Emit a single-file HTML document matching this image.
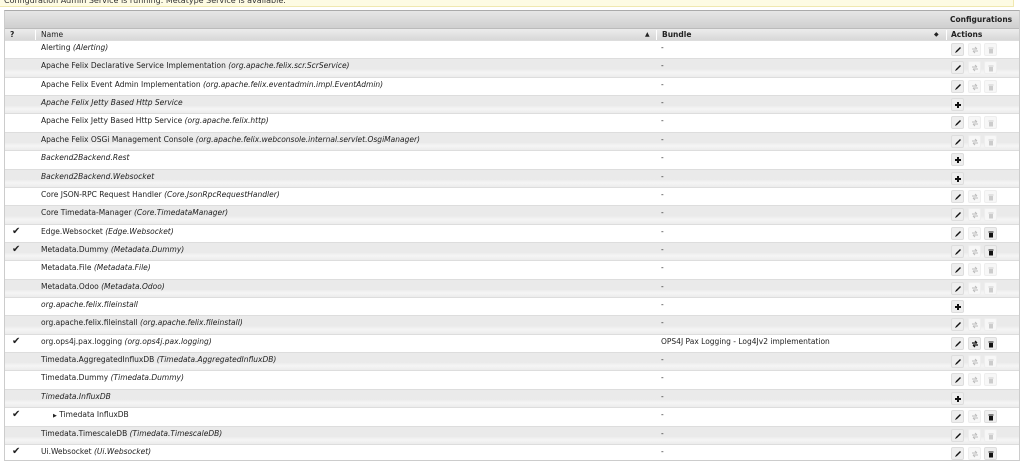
<!DOCTYPE html>
<html><head><meta charset="utf-8"><style>
*{margin:0;padding:0;box-sizing:border-box}
body{width:1024px;height:463px;overflow:hidden;background:#fff;font-family:"DejaVu Sans","Liberation Sans",sans-serif;font-size:7.5px;color:#222;position:relative}
.banner{position:absolute;left:0;top:0;width:1014px;height:7px;background:#fdfbe3;border-bottom:1px solid #f0e8b0;border-right:1px solid #f0e8b0;font-size:8px;line-height:0;color:#333}
.banner span{position:absolute;left:4px;top:-3px;line-height:7px}
.tbl{position:absolute;left:4px;top:10px;width:1016px;height:451px;border:1px solid #ccc;border-top:1px solid #aaa}
.h1{position:absolute;left:0;top:0;width:1014px;height:18px;background:linear-gradient(#e6e6e6,#cfcfcf);border-bottom:1px solid #bbb}
.h1 b{position:absolute;left:945px;top:4px;font-size:7.5px}
.h2{position:absolute;left:0;top:18px;width:1014px;height:11px;background:linear-gradient(#ececec,#d8d8d8);font-size:7.5px;line-height:11px;font-weight:bold}
.h2 span{position:absolute;top:0}
.h2 i{position:absolute;top:1px;width:1px;height:10px;background:#fff}
.r{position:absolute;left:0;width:1014px;height:18.36px;border-top:1px solid #ddd}
.g{background:linear-gradient(#eaeaea 0,#eaeaea 55%,#f5f5f5 75%,#ececec 100%)}
.r span{position:absolute;top:1px;line-height:11px;white-space:nowrap}
.n{left:36px}.bu{left:656px}
.ck{left:7px;font-size:10px}
.a{position:absolute;top:2px;left:946px;height:13px}
.btn{position:absolute;top:0;width:13px;height:13px;background:#eee;border:1px solid #ddd;border-radius:2px}
.btn svg{position:absolute;left:2px;top:2px}
</style></head><body>
<div class="banner"><span>Configuration Admin Service is running. Metatype Service is available.</span></div>
<div class="tbl">
<div class="h1"><b>Configurations</b></div>
<div class="h2"><span style="left:5px">?</span><span style="left:36px;font-weight:normal">Name</span><span style="left:640px;font-size:6px">▲</span><span style="left:657px">Bundle</span><span style="left:929px;font-size:6px">◆</span><span style="left:946px">Actions</span><i style="left:30px"></i><i style="left:651px"></i><i style="left:941px"></i></div>

<div class="r" style="top:29px"><span class="n">Alerting <i>(Alerting)</i></span><span class="bu">-</span><div class="a"><div class="btn" style="left:0"><svg width="8" height="8"><path d="M1 7L2 5L6 1L7 2L3 6Z" fill="#111"/></svg></div><div class="btn" style="left:17px;background:#f7f7f7;border-color:#eee"><svg width="8" height="8"><path d="M1 3H6M4 1L6 3M7 5H2M4 7L2 5" stroke="#bbb" fill="none"/></svg></div><div class="btn" style="left:33px;background:#f7f7f7;border-color:#eee"><svg width="8" height="8"><path d="M1.5 1.5H6.5V2.5H1.5ZM2 3H6V7.5H2Z" fill="#ccc"/></svg></div></div></div>

<div class="r g" style="top:47.36px"><span class="n">Apache Felix Declarative Service Implementation <i>(org.apache.felix.scr.ScrService)</i></span><span class="bu">-</span><div class="a"><div class="btn" style="left:0"><svg width="8" height="8"><path d="M1 7L2 5L6 1L7 2L3 6Z" fill="#111"/></svg></div><div class="btn" style="left:17px;background:#f7f7f7;border-color:#eee"><svg width="8" height="8"><path d="M1 3H6M4 1L6 3M7 5H2M4 7L2 5" stroke="#bbb" fill="none"/></svg></div><div class="btn" style="left:33px;background:#f7f7f7;border-color:#eee"><svg width="8" height="8"><path d="M1.5 1.5H6.5V2.5H1.5ZM2 3H6V7.5H2Z" fill="#ccc"/></svg></div></div></div>

<div class="r" style="top:65.72px"><span class="n">Apache Felix Event Admin Implementation <i>(org.apache.felix.eventadmin.impl.EventAdmin)</i></span><span class="bu">-</span><div class="a"><div class="btn" style="left:0"><svg width="8" height="8"><path d="M1 7L2 5L6 1L7 2L3 6Z" fill="#111"/></svg></div><div class="btn" style="left:17px;background:#f7f7f7;border-color:#eee"><svg width="8" height="8"><path d="M1 3H6M4 1L6 3M7 5H2M4 7L2 5" stroke="#bbb" fill="none"/></svg></div><div class="btn" style="left:33px;background:#f7f7f7;border-color:#eee"><svg width="8" height="8"><path d="M1.5 1.5H6.5V2.5H1.5ZM2 3H6V7.5H2Z" fill="#ccc"/></svg></div></div></div>

<div class="r g" style="top:84.08px"><span class="n"><i>Apache Felix Jetty Based Http Service</i></span><span class="bu">-</span><div class="a"><div class="btn" style="left:0"><svg width="8" height="8"><path d="M3 1H5V3H7V5H5V7H3V5H1V3H3Z" fill="#111"/></svg></div></div></div>

<div class="r" style="top:102.44px"><span class="n">Apache Felix Jetty Based Http Service <i>(org.apache.felix.http)</i></span><span class="bu">-</span><div class="a"><div class="btn" style="left:0"><svg width="8" height="8"><path d="M1 7L2 5L6 1L7 2L3 6Z" fill="#111"/></svg></div><div class="btn" style="left:17px;background:#f7f7f7;border-color:#eee"><svg width="8" height="8"><path d="M1 3H6M4 1L6 3M7 5H2M4 7L2 5" stroke="#bbb" fill="none"/></svg></div><div class="btn" style="left:33px;background:#f7f7f7;border-color:#eee"><svg width="8" height="8"><path d="M1.5 1.5H6.5V2.5H1.5ZM2 3H6V7.5H2Z" fill="#ccc"/></svg></div></div></div>

<div class="r g" style="top:120.8px"><span class="n">Apache Felix OSGi Management Console <i>(org.apache.felix.webconsole.internal.servlet.OsgiManager)</i></span><span class="bu">-</span><div class="a"><div class="btn" style="left:0"><svg width="8" height="8"><path d="M1 7L2 5L6 1L7 2L3 6Z" fill="#111"/></svg></div><div class="btn" style="left:17px;background:#f7f7f7;border-color:#eee"><svg width="8" height="8"><path d="M1 3H6M4 1L6 3M7 5H2M4 7L2 5" stroke="#bbb" fill="none"/></svg></div><div class="btn" style="left:33px;background:#f7f7f7;border-color:#eee"><svg width="8" height="8"><path d="M1.5 1.5H6.5V2.5H1.5ZM2 3H6V7.5H2Z" fill="#ccc"/></svg></div></div></div>

<div class="r" style="top:139.16px"><span class="n"><i>Backend2Backend.Rest</i></span><span class="bu">-</span><div class="a"><div class="btn" style="left:0"><svg width="8" height="8"><path d="M3 1H5V3H7V5H5V7H3V5H1V3H3Z" fill="#111"/></svg></div></div></div>

<div class="r g" style="top:157.52px"><span class="n"><i>Backend2Backend.Websocket</i></span><span class="bu">-</span><div class="a"><div class="btn" style="left:0"><svg width="8" height="8"><path d="M3 1H5V3H7V5H5V7H3V5H1V3H3Z" fill="#111"/></svg></div></div></div>

<div class="r" style="top:175.88px"><span class="n">Core JSON-RPC Request Handler <i>(Core.JsonRpcRequestHandler)</i></span><span class="bu">-</span><div class="a"><div class="btn" style="left:0"><svg width="8" height="8"><path d="M1 7L2 5L6 1L7 2L3 6Z" fill="#111"/></svg></div><div class="btn" style="left:17px;background:#f7f7f7;border-color:#eee"><svg width="8" height="8"><path d="M1 3H6M4 1L6 3M7 5H2M4 7L2 5" stroke="#bbb" fill="none"/></svg></div><div class="btn" style="left:33px;background:#f7f7f7;border-color:#eee"><svg width="8" height="8"><path d="M1.5 1.5H6.5V2.5H1.5ZM2 3H6V7.5H2Z" fill="#ccc"/></svg></div></div></div>

<div class="r g" style="top:194.24px"><span class="n">Core Timedata-Manager <i>(Core.TimedataManager)</i></span><span class="bu">-</span><div class="a"><div class="btn" style="left:0"><svg width="8" height="8"><path d="M1 7L2 5L6 1L7 2L3 6Z" fill="#111"/></svg></div><div class="btn" style="left:17px;background:#f7f7f7;border-color:#eee"><svg width="8" height="8"><path d="M1 3H6M4 1L6 3M7 5H2M4 7L2 5" stroke="#bbb" fill="none"/></svg></div><div class="btn" style="left:33px;background:#f7f7f7;border-color:#eee"><svg width="8" height="8"><path d="M1.5 1.5H6.5V2.5H1.5ZM2 3H6V7.5H2Z" fill="#ccc"/></svg></div></div></div>

<div class="r" style="top:212.6px"><span class="ck">✔</span><span class="n">Edge.Websocket <i>(Edge.Websocket)</i></span><span class="bu">-</span><div class="a"><div class="btn" style="left:0"><svg width="8" height="8"><path d="M1 7L2 5L6 1L7 2L3 6Z" fill="#111"/></svg></div><div class="btn" style="left:17px;background:#f7f7f7;border-color:#eee"><svg width="8" height="8"><path d="M1 3H6M4 1L6 3M7 5H2M4 7L2 5" stroke="#bbb" fill="none"/></svg></div><div class="btn" style="left:33px"><svg width="8" height="8"><path d="M1.5 1.5H6.5V2.5H1.5ZM2 3H6V7.5H2Z" fill="#111"/></svg></div></div></div>

<div class="r g" style="top:230.96px"><span class="ck">✔</span><span class="n">Metadata.Dummy <i>(Metadata.Dummy)</i></span><span class="bu">-</span><div class="a"><div class="btn" style="left:0"><svg width="8" height="8"><path d="M1 7L2 5L6 1L7 2L3 6Z" fill="#111"/></svg></div><div class="btn" style="left:17px;background:#f7f7f7;border-color:#eee"><svg width="8" height="8"><path d="M1 3H6M4 1L6 3M7 5H2M4 7L2 5" stroke="#bbb" fill="none"/></svg></div><div class="btn" style="left:33px"><svg width="8" height="8"><path d="M1.5 1.5H6.5V2.5H1.5ZM2 3H6V7.5H2Z" fill="#111"/></svg></div></div></div>

<div class="r" style="top:249.32px"><span class="n">Metadata.File <i>(Metadata.File)</i></span><span class="bu">-</span><div class="a"><div class="btn" style="left:0"><svg width="8" height="8"><path d="M1 7L2 5L6 1L7 2L3 6Z" fill="#111"/></svg></div><div class="btn" style="left:17px;background:#f7f7f7;border-color:#eee"><svg width="8" height="8"><path d="M1 3H6M4 1L6 3M7 5H2M4 7L2 5" stroke="#bbb" fill="none"/></svg></div><div class="btn" style="left:33px;background:#f7f7f7;border-color:#eee"><svg width="8" height="8"><path d="M1.5 1.5H6.5V2.5H1.5ZM2 3H6V7.5H2Z" fill="#ccc"/></svg></div></div></div>

<div class="r g" style="top:267.68px"><span class="n">Metadata.Odoo <i>(Metadata.Odoo)</i></span><span class="bu">-</span><div class="a"><div class="btn" style="left:0"><svg width="8" height="8"><path d="M1 7L2 5L6 1L7 2L3 6Z" fill="#111"/></svg></div><div class="btn" style="left:17px;background:#f7f7f7;border-color:#eee"><svg width="8" height="8"><path d="M1 3H6M4 1L6 3M7 5H2M4 7L2 5" stroke="#bbb" fill="none"/></svg></div><div class="btn" style="left:33px;background:#f7f7f7;border-color:#eee"><svg width="8" height="8"><path d="M1.5 1.5H6.5V2.5H1.5ZM2 3H6V7.5H2Z" fill="#ccc"/></svg></div></div></div>

<div class="r" style="top:286.04px"><span class="n"><i>org.apache.felix.fileinstall</i></span><span class="bu">-</span><div class="a"><div class="btn" style="left:0"><svg width="8" height="8"><path d="M3 1H5V3H7V5H5V7H3V5H1V3H3Z" fill="#111"/></svg></div></div></div>

<div class="r g" style="top:304.4px"><span class="n">org.apache.felix.fileinstall <i>(org.apache.felix.fileinstall)</i></span><span class="bu">-</span><div class="a"><div class="btn" style="left:0"><svg width="8" height="8"><path d="M1 7L2 5L6 1L7 2L3 6Z" fill="#111"/></svg></div><div class="btn" style="left:17px;background:#f7f7f7;border-color:#eee"><svg width="8" height="8"><path d="M1 3H6M4 1L6 3M7 5H2M4 7L2 5" stroke="#bbb" fill="none"/></svg></div><div class="btn" style="left:33px;background:#f7f7f7;border-color:#eee"><svg width="8" height="8"><path d="M1.5 1.5H6.5V2.5H1.5ZM2 3H6V7.5H2Z" fill="#ccc"/></svg></div></div></div>

<div class="r" style="top:322.76px"><span class="ck">✔</span><span class="n">org.ops4j.pax.logging <i>(org.ops4j.pax.logging)</i></span><span class="bu">OPS4J Pax Logging - Log4Jv2 implementation</span><div class="a"><div class="btn" style="left:0"><svg width="8" height="8"><path d="M1 7L2 5L6 1L7 2L3 6Z" fill="#111"/></svg></div><div class="btn" style="left:17px"><svg width="8" height="8"><path d="M1 3H6M4 1L6 3M7 5H2M4 7L2 5" stroke="#111" stroke-width="1.3" fill="none"/></svg></div><div class="btn" style="left:33px"><svg width="8" height="8"><path d="M1.5 1.5H6.5V2.5H1.5ZM2 3H6V7.5H2Z" fill="#111"/></svg></div></div></div>

<div class="r g" style="top:341.12px"><span class="n">Timedata.AggregatedInfluxDB <i>(Timedata.AggregatedInfluxDB)</i></span><span class="bu">-</span><div class="a"><div class="btn" style="left:0"><svg width="8" height="8"><path d="M1 7L2 5L6 1L7 2L3 6Z" fill="#111"/></svg></div><div class="btn" style="left:17px;background:#f7f7f7;border-color:#eee"><svg width="8" height="8"><path d="M1 3H6M4 1L6 3M7 5H2M4 7L2 5" stroke="#bbb" fill="none"/></svg></div><div class="btn" style="left:33px;background:#f7f7f7;border-color:#eee"><svg width="8" height="8"><path d="M1.5 1.5H6.5V2.5H1.5ZM2 3H6V7.5H2Z" fill="#ccc"/></svg></div></div></div>

<div class="r" style="top:359.48px"><span class="n">Timedata.Dummy <i>(Timedata.Dummy)</i></span><span class="bu">-</span><div class="a"><div class="btn" style="left:0"><svg width="8" height="8"><path d="M1 7L2 5L6 1L7 2L3 6Z" fill="#111"/></svg></div><div class="btn" style="left:17px;background:#f7f7f7;border-color:#eee"><svg width="8" height="8"><path d="M1 3H6M4 1L6 3M7 5H2M4 7L2 5" stroke="#bbb" fill="none"/></svg></div><div class="btn" style="left:33px;background:#f7f7f7;border-color:#eee"><svg width="8" height="8"><path d="M1.5 1.5H6.5V2.5H1.5ZM2 3H6V7.5H2Z" fill="#ccc"/></svg></div></div></div>

<div class="r g" style="top:377.84px"><span class="n"><i>Timedata.InfluxDB</i></span><span class="bu">-</span><div class="a"><div class="btn" style="left:0"><svg width="8" height="8"><path d="M3 1H5V3H7V5H5V7H3V5H1V3H3Z" fill="#111"/></svg></div></div></div>

<div class="r" style="top:396.2px"><span class="ck">✔</span><span class="n" style="left:48px"><span style="position:static;font-size:5px">▶</span> Timedata InfluxDB</span><span class="bu">-</span><div class="a"><div class="btn" style="left:0"><svg width="8" height="8"><path d="M1 7L2 5L6 1L7 2L3 6Z" fill="#111"/></svg></div><div class="btn" style="left:17px;background:#f7f7f7;border-color:#eee"><svg width="8" height="8"><path d="M1 3H6M4 1L6 3M7 5H2M4 7L2 5" stroke="#bbb" fill="none"/></svg></div><div class="btn" style="left:33px"><svg width="8" height="8"><path d="M1.5 1.5H6.5V2.5H1.5ZM2 3H6V7.5H2Z" fill="#111"/></svg></div></div></div>

<div class="r g" style="top:414.56px"><span class="n">Timedata.TimescaleDB <i>(Timedata.TimescaleDB)</i></span><span class="bu">-</span><div class="a"><div class="btn" style="left:0"><svg width="8" height="8"><path d="M1 7L2 5L6 1L7 2L3 6Z" fill="#111"/></svg></div><div class="btn" style="left:17px;background:#f7f7f7;border-color:#eee"><svg width="8" height="8"><path d="M1 3H6M4 1L6 3M7 5H2M4 7L2 5" stroke="#bbb" fill="none"/></svg></div><div class="btn" style="left:33px;background:#f7f7f7;border-color:#eee"><svg width="8" height="8"><path d="M1.5 1.5H6.5V2.5H1.5ZM2 3H6V7.5H2Z" fill="#ccc"/></svg></div></div></div>

<div class="r" style="top:432.92px;height:18px"><span class="ck">✔</span><span class="n">Ui.Websocket <i>(Ui.Websocket)</i></span><span class="bu">-</span><div class="a"><div class="btn" style="left:0"><svg width="8" height="8"><path d="M1 7L2 5L6 1L7 2L3 6Z" fill="#111"/></svg></div><div class="btn" style="left:17px;background:#f7f7f7;border-color:#eee"><svg width="8" height="8"><path d="M1 3H6M4 1L6 3M7 5H2M4 7L2 5" stroke="#bbb" fill="none"/></svg></div><div class="btn" style="left:33px"><svg width="8" height="8"><path d="M1.5 1.5H6.5V2.5H1.5ZM2 3H6V7.5H2Z" fill="#111"/></svg></div></div></div>
</div>
</body></html>
